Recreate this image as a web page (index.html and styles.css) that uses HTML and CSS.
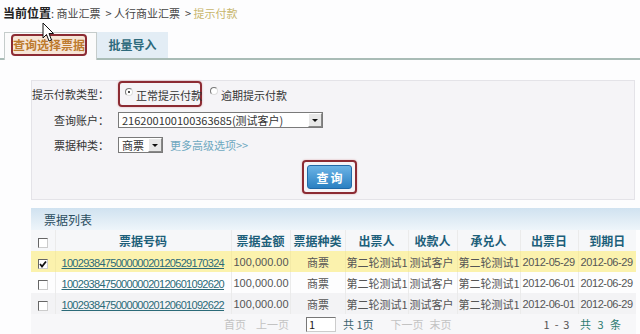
FILE: index.html
```html
<!DOCTYPE html>
<html lang="zh-CN">
<head>
    <meta charset="UTF-8">
    <title>提示付款</title>
    <link rel="stylesheet" href="styles.css">
</head>
<body>
    <div class="crumb"><b>当前位置</b>: 商业汇票 &nbsp;&gt; 人行商业汇票 &nbsp;&gt; <span class="here">提示付款</span></div>

    <!-- 鼠标指针 -->
    <svg class="cursor" width="13" height="21" viewBox="0 0 13 21">
        <path d="M1 1 L1 16 L4.5 12.5 L7 19 L9.5 18 L7 11.5 L11.5 11.5 Z" fill="#fff" stroke="#111" stroke-width="1" stroke-linejoin="round"/>
    </svg>

    <div class="tabs">
        <div class="tab active"><span class="mark">查询选择票据</span></div>
        <div class="tab">批量导入</div>
    </div>

    <div class="main">
        <div class="query">
            <div class="row row-type">
                <div class="label">提示付款类型：</div>
                <div class="field">
                    <span class="hl radio-hl"><span class="radio on"></span>正常提示付款</span>
                    <span class="radio"></span><span class="opt">逾期提示付款</span>
                </div>
            </div>
            <div class="row">
                <div class="label">查询账户：</div>
                <div class="field">
                    <div class="select wide"><span class="val">216200100100363685(测试客户)</span><span class="arr"></span></div>
                </div>
            </div>
            <div class="row">
                <div class="label">票据种类：</div>
                <div class="field">
                    <div class="select small"><span class="val">商票</span><span class="arr"></span></div>
                    <a class="more" href="#">更多高级选项&gt;&gt;</a>
                </div>
            </div>
            <div class="actions">
                <span class="hl btn-hl"><button class="btn">查询</button></span>
            </div>
        </div>

        <div class="list">
            <div class="caption">票据列表</div>
            <table>
                <colgroup>
                    <col style="width:24px"><col style="width:176px"><col style="width:59px"><col style="width:55px">
                    <col style="width:63px"><col style="width:49px"><col style="width:63px"><col style="width:58px"><col style="width:58px">
                </colgroup>
                <tr class="head">
                    <th><span class="cb"></span></th>
                    <th>票据号码</th>
                    <th>票据金额</th>
                    <th>票据种类</th>
                    <th>出票人</th>
                    <th>收款人</th>
                    <th>承兑人</th>
                    <th>出票日</th>
                    <th>到期日</th>
                </tr>
                <tr class="picked">
                    <td><span class="cb on"><svg width="8" height="8" viewBox="0 0 8 8"><path d="M1 4 L3 6.5 L7 1.5" fill="none" stroke="#111" stroke-width="1.8"/></svg></span></td>
                    <td class="no"><a href="#">100293847500000020120529170324</a></td>
                    <td class="amt">100,000.00</td>
                    <td class="mid">商票</td>
                    <td>第二轮测试1</td>
                    <td>测试客户</td>
                    <td>第二轮测试1</td>
                    <td class="date">2012-05-29</td>
                    <td class="date">2012-06-29</td>
                </tr>
                <tr>
                    <td><span class="cb"></span></td>
                    <td class="no"><a href="#">100293847500000020120601092620</a></td>
                    <td class="amt">100,000.00</td>
                    <td class="mid">商票</td>
                    <td>第二轮测试1</td>
                    <td>测试客户</td>
                    <td>第二轮测试1</td>
                    <td class="date">2012-06-01</td>
                    <td class="date">2012-06-29</td>
                </tr>
                <tr class="alt">
                    <td><span class="cb"></span></td>
                    <td class="no"><a href="#">100293847500000020120601092622</a></td>
                    <td class="amt">100,000.00</td>
                    <td class="mid">商票</td>
                    <td>第二轮测试1</td>
                    <td>测试客户</td>
                    <td>第二轮测试1</td>
                    <td class="date">2012-06-01</td>
                    <td class="date">2012-06-29</td>
                </tr>
            </table>
            <div class="pager">
                <span class="off">首页</span>
                <span class="off prev">上一页</span>
                <span class="page-box">1</span>
                <span class="total">共 1页</span>
                <span class="off next">下一页</span>
                <span class="off last">末页</span>
                <span class="count">1 &nbsp;- &nbsp;3 <em>共 3 条</em></span>
            </div>
        </div>
    </div>
</body>
</html>
```

FILE: styles.css
```css
* {
    margin: 0;
    padding: 0;
    box-sizing: border-box;
}

body {
    width: 640px;
    height: 334px;
    overflow: hidden;
    background-color: #fdfdfe;
    color: #333;
    font-family: "Noto Sans CJK SC", "Liberation Sans", sans-serif;
    font-size: 11px;
    position: relative;
}

/* 面包屑 */
.crumb {
    height: 26px;
    line-height: 26px;
    padding-left: 3px;
    color: #444;
}

.crumb b {
    font-size: 12px;
    color: #222;
}

.crumb .here {
    color: #c8b66c;
}

.cursor {
    position: absolute;
    left: 42px;
    top: 22px;
}

/* 选项卡 */
.tabs {
    margin-top: 6px;
    height: 28px;
    display: flex;
    border-bottom: 2px solid #a9bcb6;
}

.tab {
    height: 26px;
    line-height: 26px;
    width: 71px;
    text-align: center;
    background-color: #e3edf5;
    color: #2d6a7c;
    font-weight: bold;
    font-size: 12px;
}

.tab.active {
    width: 93px;
    height: 28px;
    margin-left: 4px;
    margin-bottom: -2px;
    padding: 1px 0 0 6px;
    text-align: left;
    background-color: #fbfbfb;
    border: 1px solid #c5cccb;
    border-bottom: none;
}

.mark {
    display: block;
    width: 76px;
    height: 22px;
    line-height: 18px;
    text-align: center;
    border: 2px solid #8c2b33;
    border-radius: 4px;
    background-color: #f6e5d6;
    color: #bd7a2e;
}

/* 查询区域 */
.main {
    padding-left: 31px;
}

.query {
    margin-top: 20px;
    margin-right: 5px;
    height: 120px;
    border: 1px solid #e4e3e8;
    background-color: #f5f4f7;
}

.row {
    display: flex;
    align-items: center;
    height: 25px;
}

.row-type {
    height: 26px;
}

.label {
    width: 77px;
    text-align: right;
    color: #333;
}

.field {
    display: flex;
    align-items: center;
    padding-left: 9px;
    white-space: nowrap;
}

.hl {
    display: inline-flex;
    align-items: center;
    border: 2px solid #8c2b33;
    border-radius: 4px;
    box-shadow: 0 0 2px rgba(200, 90, 90, 0.5);
}

.radio-hl {
    height: 26px;
    width: 84px;
    padding-left: 5px;
    padding-top: 2px;
}

.radio {
    display: inline-block;
    width: 8px;
    height: 8px;
    border: 1px solid;
    border-color: #777 #ddd #ddd #777;
    border-radius: 50%;
    background-color: #fff;
    margin-right: 3px;
    margin-top: -7px;
    position: relative;
    flex-shrink: 0;
}

.radio.on::after {
    content: "";
    position: absolute;
    left: 2px;
    top: 2px;
    width: 2px;
    height: 2px;
    border-radius: 50%;
    background-color: #111;
}

.radio-hl + .radio {
    margin-left: 8px;
}

.opt {
    padding-top: 2px;
}

.select {
    display: inline-flex;
    height: 16px;
    border: 1px solid #7a7a7a;
    background-color: #fff;
}

.select.wide {
    width: 205px;
}

.select.small {
    width: 45px;
}

.select .val {
    flex: 1;
    padding-left: 3px;
    line-height: 14px;
    white-space: nowrap;
    overflow: hidden;
}

.select .arr {
    width: 14px;
    height: 14px;
    background-color: #e8e8e8;
    border: 1px solid;
    border-color: #fff #888 #888 #fff;
    position: relative;
}

.select .arr::after {
    content: "";
    position: absolute;
    left: 3px;
    top: 5px;
    border-left: 3px solid transparent;
    border-right: 3px solid transparent;
    border-top: 3px solid #111;
}

.more {
    margin-left: 7px;
    color: #6ea8bf;
    text-decoration: none;
}

.actions {
    margin-top: 3px;
    padding-left: 270px;
}

.btn-hl {
    padding: 3px;
}

.btn {
    width: 45px;
    height: 24px;
    border: 1px solid #2068a6;
    border-radius: 3px;
    background: linear-gradient(#6cb4e6, #2b80c2);
    color: #fff;
    font-family: inherit;
    font-size: 12px;
    font-weight: bold;
    letter-spacing: 2px;
    padding-left: 2px;
}

/* 票据列表 */
.list {
    margin-top: 8px;
}

.caption {
    height: 22px;
    line-height: 24px;
    padding-left: 13px;
    font-size: 12px;
    color: #2b4d5f;
    background: linear-gradient(#d0e2f0, #eef5fa);
}

table {
    width: 605px;
    border-collapse: collapse;
    table-layout: fixed;
}

th, td {
    height: 21px;
    border-left: 1px solid #ebebeb;
    white-space: nowrap;
    overflow: hidden;
    padding: 0;
}

th:first-child, td:first-child {
    border-left: none;
    text-align: center;
}

.head {
    background-color: #f6f7f9;
}

th {
    color: #1d5f7a;
    font-size: 12px;
}

td {
    color: #555;
    padding-left: 1px;
}

.picked {
    background-color: #fbf2ad;
}

.picked td {
    border-left-color: #f3eaa6;
}

.alt {
    background-color: #f3f3f5;
}

.cb {
    display: inline-block;
    width: 10px;
    height: 10px;
    border: 1px solid;
    border-color: #666 #ccc #ccc #666;
    background-color: #fff;
    vertical-align: middle;
    line-height: 0;
}

.no {
    padding-left: 6px;
}

.no a,
.amt,
.date {
    font-family: "Liberation Sans", sans-serif;
    font-size: 11px;
}

.no a {
    color: #2b6a78;
    letter-spacing: -0.7px;
}

.amt {
    padding-left: 2px;
}

.date {
    letter-spacing: -0.4px;
    padding-left: 2px;
}

.mid {
    text-align: center;
}

.pager {
    width: 605px;
    height: 20px;
    display: flex;
    align-items: center;
    padding-left: 193px;
    background-color: #f7f7f9;
    color: #3b6470;
}

.off {
    color: #c3c3c3;
}

.prev {
    margin-left: 10px;
}

.page-box {
    width: 30px;
    height: 15px;
    margin-left: 17px;
    padding-left: 2px;
    line-height: 13px;
    border: 1px solid;
    border-color: #777 #ccc #ccc #777;
    background-color: #fff;
    color: #222;
}

.total {
    margin-left: 7px;
}

.next {
    margin-left: 17px;
}

.last {
    margin-left: 6px;
}

.count {
    margin-left: auto;
    margin-right: 13px;
    color: #555;
}

.count em {
    font-style: normal;
    color: #2f7d72;
    margin-left: 8px;
    letter-spacing: 2px;
}
```
